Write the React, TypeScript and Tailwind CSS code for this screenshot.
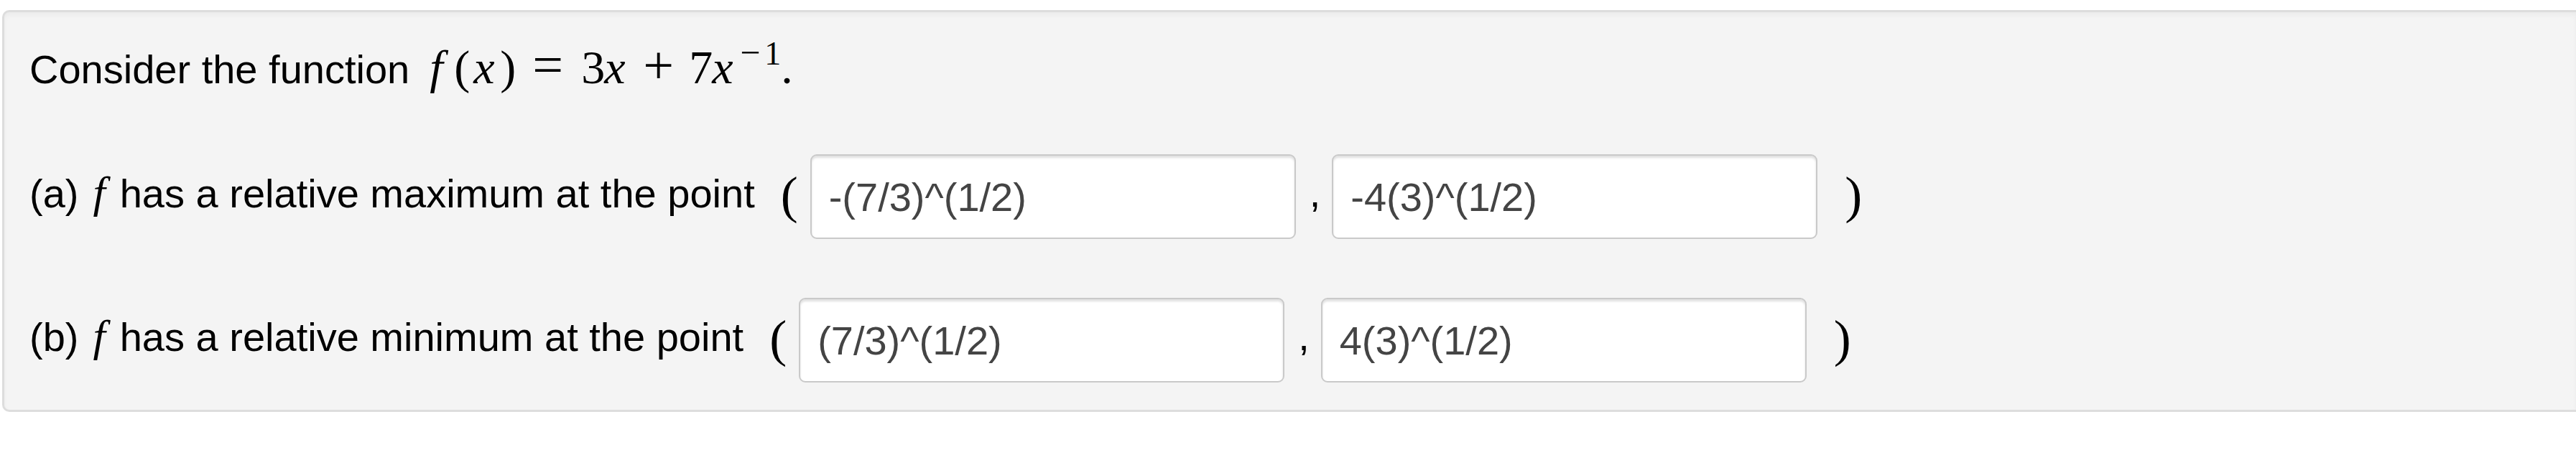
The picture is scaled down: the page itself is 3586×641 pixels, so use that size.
import React from 'react'

// serif italic for the math letters
const mathI = 'font-["Liberation_Serif",serif] italic'
const mathR = 'font-["Liberation_Serif",serif] not-italic'

function Paren({ ch }: { ch: string }) {
  return (
    <span className='font-["Liberation_Serif",serif] text-[72px] leading-none font-light text-black'>
      {ch}
    </span>
  )
}

function AnswerBox({ value }: { value: string }) {
  return (
    <input
      readOnly
      defaultValue={value}
      className='h-[118px] w-[676px] shrink-0 rounded-[9px] border-2 border-[#c9c9c9] bg-white px-[24px] font-["Liberation_Sans",Arial,sans-serif] text-[56px] text-[#444] shadow-[inset_0_3px_3px_rgba(0,0,0,0.12)] outline-none'
    />
  )
}

function PointRow({
  part,
  kind,
  x,
  y,
}: {
  part: string
  kind: string
  x: string
  y: string
}) {
  return (
    <div className="flex items-center">
      <span className="mb-[10px] whitespace-pre">
        ({part})<span className={`${mathI} mx-[20px] text-[62px]`}>f</span>has a relative {kind} at the point
      </span>
      <span className="ml-[36px] mr-[17px] mb-[4px]">
        <Paren ch="(" />
      </span>
      <AnswerBox value={x} />
      <span className="mb-[10px] ml-[19px] mr-[16px]">,</span>
      <AnswerBox value={y} />
      <span className="ml-[38px] mb-[4px]">
        <Paren ch=")" />
      </span>
    </div>
  )
}

export default function App() {
  return (
    <div className="min-h-[641px] w-full bg-white pt-[14px] pl-[3px]">
      <div className='h-[560px] rounded-l-[10px] border-[3px] border-r-0 border-[#dddddd] bg-[#f4f4f4] pl-[35px] pt-[31px] font-["Liberation_Sans",Arial,sans-serif] text-[56px] text-black shadow-[inset_0_4px_6px_rgba(0,0,0,0.04)]'>
        {/* statement */}
        <div className="flex h-[64px] items-baseline whitespace-pre leading-[64px]">
          <span>Consider the function</span>
          <span className="ml-[28px] text-[66px] leading-none">
            <span className={`${mathI} inline-block w-[34px]`}>f</span>
            <span className={`${mathR} inline-block w-[27px]`}>(</span>
            <span className={`${mathI} inline-block w-[37px]`}>x</span>
            <span className={`${mathR} inline-block w-[45px]`}>)</span>
            <span className={`${mathR} inline-block w-[68px] text-[76px]`}>=</span>
            <span className={`${mathR} inline-block w-[32px]`}>3</span>
            <span className={`${mathI} inline-block w-[54px]`}>x</span>
            <span className={`${mathR} inline-block w-[64px] text-[76px]`}>+</span>
            <span className={`${mathR} inline-block w-[32px]`}>7</span>
            <span className={`${mathI} inline-block w-[39px]`}>x</span>
            <span className={`${mathR} inline-block w-[34px] align-[26px] text-[50px]`}>−</span>
            <span className={`${mathR} inline-block w-[23px] align-[26px] text-[46px]`}>1</span>
            <span className={mathR}>.</span>
          </span>
        </div>

        {/* answers */}
        <div className="mt-[103px] leading-[64px]">
          <PointRow part="a" kind="maximum" x="-(7/3)^(1/2)" y="-4(3)^(1/2)" />
        </div>
        <div className="mt-[82px] leading-[64px]">
          <PointRow part="b" kind="minimum" x="(7/3)^(1/2)" y="4(3)^(1/2)" />
        </div>
      </div>
    </div>
  )
}
